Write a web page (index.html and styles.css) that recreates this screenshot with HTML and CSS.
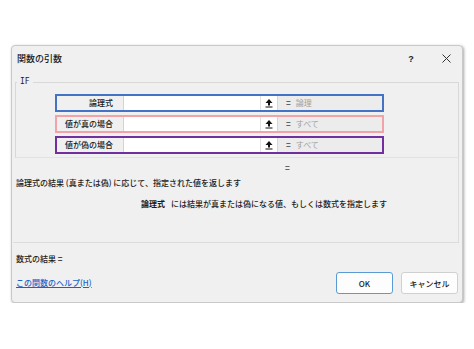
FILE: index.html
```html
<!DOCTYPE html>
<html>
<head>
  <title>関数の引数</title>
  <link rel="stylesheet" href="styles.css">
</head>
<body>
  <div class="dialog">
    <div class="titlebar">
      <span class="title">関数の引数</span>
      <span class="help">?</span>
      <span class="close">
        <svg width="9" height="9" viewBox="0 0 9 9"><path d="M0.5 0.5 L8.5 8.5 M8.5 0.5 L0.5 8.5" stroke="#333" stroke-width="1" fill="none"/></svg>
      </span>
    </div>

    <fieldset class="group">
      <legend>IF</legend>
      <div class="args">
        <div class="arg arg-blue">
          <div class="argName">論理式</div>
          <div class="argInput"></div>
          <div class="argRef">
            <svg width="8" height="9" viewBox="0 0 8 9"><path d="M4 0 L7.5 4 L0.5 4 Z" fill="#111"/><rect x="3" y="3.5" width="2" height="3" fill="#111"/><rect x="0.5" y="7.5" width="7" height="1" fill="#111"/></svg>
          </div>
          <div class="argValue"><span class="eq">=</span>論理</div>
        </div>
        <div class="arg arg-pink">
          <div class="argName">値が真の場合</div>
          <div class="argInput"></div>
          <div class="argRef">
            <svg width="8" height="9" viewBox="0 0 8 9"><path d="M4 0 L7.5 4 L0.5 4 Z" fill="#111"/><rect x="3" y="3.5" width="2" height="3" fill="#111"/><rect x="0.5" y="7.5" width="7" height="1" fill="#111"/></svg>
          </div>
          <div class="argValue"><span class="eq">=</span>すべて</div>
        </div>
        <div class="arg arg-purple">
          <div class="argName">値が偽の場合</div>
          <div class="argInput"></div>
          <div class="argRef">
            <svg width="8" height="9" viewBox="0 0 8 9"><path d="M4 0 L7.5 4 L0.5 4 Z" fill="#111"/><rect x="3" y="3.5" width="2" height="3" fill="#111"/><rect x="0.5" y="7.5" width="7" height="1" fill="#111"/></svg>
          </div>
          <div class="argValue"><span class="eq">=</span>すべて</div>
        </div>
      </div>
    </fieldset>

    <div class="desc">
      <div class="total">=</div>
      <p class="summary">論理式の結果 (真または偽) に応じて、指定された値を返します</p>
      <p class="detail"><b>論理式</b>には結果が真または偽になる値、もしくは数式を指定します</p>
    </div>

    <div class="result">数式の結果 <span class="resultEq">=</span></div>

    <div class="footer">
      <a href="#" class="helpLink">この関数のヘルプ(H)</a>
      <div class="buttons">
        <button class="btn btn-ok">OK</button>
        <button class="btn">キャンセル</button>
      </div>
    </div>
  </div>
</body>
</html>
```

FILE: styles.css
```css
body {
  margin: 0;
  background-color: #fff;
  font-family: "Noto Sans CJK JP", "Noto Sans", sans-serif;
  font-size: 8px;
  font-weight: 500;
  line-height: 12px;
  color: #1a1a1a;
}
.dialog {
  box-sizing: border-box;
  width: 452px;
  height: 258px;
  margin: 45px 0 0 11px;
  background-color: #f0f0f0;
  border: 1px solid #c9c9c9;
  border-radius: 4px;
  box-shadow: 1px 1px 3px rgba(0, 0, 0, 0.35);
}
.titlebar {
  display: flex;
  align-items: center;
  height: 25px;
  padding-left: 5px;
}
.title {
  flex-grow: 1;
  font-size: 9px;
}
.help {
  width: 24px;
  margin-right: 7px;
  text-align: center;
  font-family: "Liberation Sans", sans-serif;
  font-weight: bold;
  font-size: 9px;
}
.close {
  display: flex;
  justify-content: center;
  width: 32px;
}
.group {
  margin: 5px 3px 0 3px;
  padding: 0;
  border: 1px solid #d8d8d8;
  border-bottom-color: #e2e2e2;
}
.group legend {
  margin-left: 1px;
  padding: 0 3px;
  font-family: "DejaVu Sans Mono", monospace;
  font-size: 8px;
  line-height: 12px;
}
.args {
  display: flex;
  flex-direction: column;
  gap: 3px;
  padding: 6px 0 3px 39px;
}
.arg {
  box-sizing: border-box;
  display: flex;
  width: 329px;
  height: 18px;
  border: 2px solid;
}
.arg-blue {
  border-color: #4472c4;
}
.arg-pink {
  border-color: #f2a3a8;
}
.arg-purple {
  border-color: #7030a0;
}
.argName {
  box-sizing: border-box;
  width: 67px;
  padding-right: 10px;
  text-align: right;
  background-color: #f0f0f0;
  border-right: 1px solid #d4d4d4;
  line-height: 14px;
}
.argInput {
  flex-grow: 1;
  background-color: #fff;
}
.argRef {
  box-sizing: border-box;
  display: flex;
  align-items: center;
  justify-content: center;
  width: 17px;
  background-color: #fff;
  border-left: 1px solid #e2e2e2;
}
.argValue {
  box-sizing: border-box;
  width: 105px;
  padding-left: 8px;
  background-color: #ececec;
  border-left: 1px solid #d6d6d6;
  color: #a0a0a0;
  font-weight: 400;
  line-height: 14px;
}
.eq {
  margin-right: 5px;
  color: #444;
  font-weight: bold;
}
.desc {
  box-sizing: border-box;
  height: 85px;
  margin: 0 3px 0 1px;
  padding: 4px 0 0 3px;
  border-right: 1px solid #dcdcdc;
  border-bottom: 1px solid #dcdcdc;
}
.total {
  margin-left: 269px;
  color: #444;
  font-weight: bold;
}
.summary {
  margin: 3px 0 0 0;
}
.detail {
  margin: 9px 0 0 0;
  padding-left: 125px;
}
.detail b {
  margin-right: 6px;
  font-weight: 700;
}
.result {
  margin-top: 10px;
  padding-left: 4px;
}
.resultEq {
  font-weight: bold;
}
.footer {
  display: flex;
  align-items: center;
  justify-content: space-between;
  margin-top: 7px;
  padding: 0 4px;
}
.helpLink {
  color: #1a62c7;
  text-decoration: underline;
}
.buttons {
  display: flex;
  gap: 8px;
}
.btn {
  width: 57px;
  height: 22px;
  padding: 0;
  font-family: "Noto Sans CJK JP", "Noto Sans", sans-serif;
  font-size: 8px;
  font-weight: 500;
  color: #1a1a1a;
  background-color: #fdfdfd;
  border: 1px solid #d0d0d0;
  border-radius: 3px;
}
.btn-ok {
  border-color: #5b9bd5;
}
```
